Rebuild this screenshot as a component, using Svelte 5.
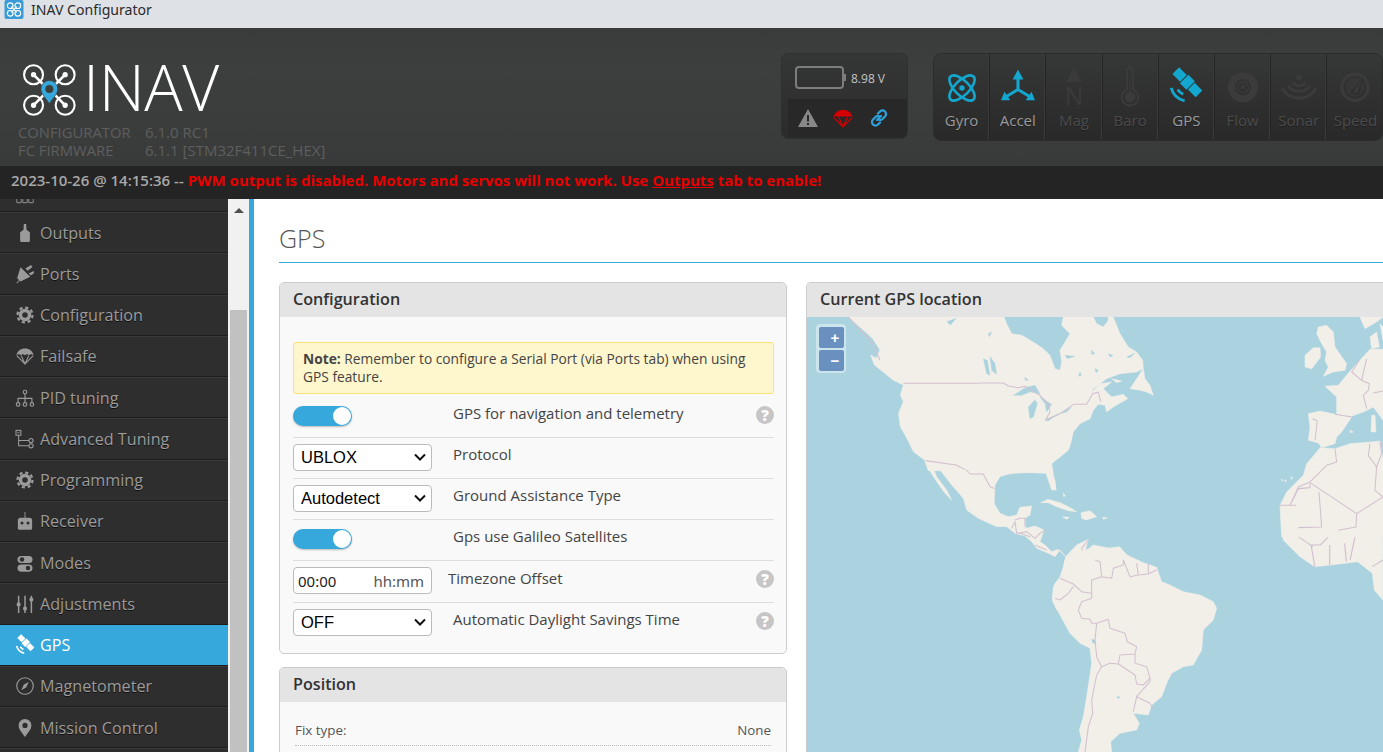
<script>
  const sat = '<g transform="rotate(-45 13.600 9.400)"><rect x="10" y="-3.800" width="7.200" height="8.300"/><rect x="9" y="5.200" width="9.200" height="7"/><rect x="10" y="12.900" width="7.200" height="8.300"/></g><path fill="none" stroke="currentColor" stroke-width="2.200" d="M5.700 14.400A9.300 9.300 0 0 0 9.900 18M.8 13.200A13.600 13.600 0 0 0 11 23"/>';
  const gear = '<circle cx="12" cy="12" r="6" fill="none" stroke="currentColor" stroke-width="4.600"/><circle cx="12" cy="12" r="10" fill="none" stroke="currentColor" stroke-width="3" stroke-dasharray="4.200 3.650"/>';
  const chute = '<path d="M.5 11C1.500 5.500 6.500 2 12 2s10.500 3.500 11.500 9c-2-1.600-4.200-1.600-6 0-1.800-1.600-3.700-1.600-5.500 0-1.800-1.600-3.700-1.600-5.500 0-1.800-1.600-4-1.600-6 0z"/><path d="M1 11.500 12 22.500 23 11.500M7 11.500 12 22.500 17 11.500" fill="none" stroke="currentColor" stroke-width="1.500"/>';
  const icons = {
    mixer: '<g fill="none" stroke="currentColor" stroke-width="1.500" opacity=".75"><rect x="1" y="20" width="6" height="7.500" rx="1"/><rect x="9" y="20" width="6" height="7.500" rx="1"/><rect x="17" y="20" width="6" height="7.500" rx="1"/></g>',
    outputs: '<path d="M10.500 0h3l.5 7.500 4.500 3.500V22a2 2 0 0 1-2 2H7.500a2 2 0 0 1-2-2V11L10 7.500z"/>',
    ports: '<path d="M.5 24 4 20 1.500 17.500 6 3 19 15.500 6 22 4.700 20.800 1.500 24.500z"/><path d="M12.500 4.500 20 0l2 2.500L15.500 7.500zM17 11 24 8v3L19.500 14z"/>',
    gear,
    failsafe: chute,
    pid: '<g fill="none" stroke="currentColor" stroke-width="1.500"><circle cx="12" cy="4" r="2.400"/><circle cx="2.800" cy="20.500" r="2.400"/><circle cx="12" cy="20.500" r="2.400"/><circle cx="21.200" cy="20.500" r="2.400"/><path d="M12 6.400V18M2.800 18V12.500H21.200V18"/></g>',
    adv: '<g fill="none" stroke="currentColor" stroke-width="1.400"><rect x="0" y=".5" width="6.500" height="6.500"/><circle cx="20" cy="14" r="2.800"/><circle cx="20" cy="21" r="2.800"/><path d="M3.500 7V21H17.200M3.500 14H17.200"/></g><path d="M2 3h2.500v1.400H2z"/>',
    receiver: '<path d="M11.400 0h1.200v8h-1.200z"/><path d="M2.500 11a3.500 3.500 0 0 1 3.500-3.500h12a3.500 3.500 0 0 1 3.500 3.500v11a1.500 1.500 0 0 1-1.500 1.500H4A1.500 1.500 0 0 1 2.500 22z"/><circle cx="8" cy="14.500" r="2" fill="#2e2e2e"/><circle cx="16" cy="14.500" r="2" fill="#2e2e2e"/>',
    modes: '<rect x="2" y="2.500" width="20" height="9.500" rx="4.700"/><rect x="2" y="14" width="20" height="9.500" rx="4.700"/><circle cx="8" cy="7.200" r="3" fill="#2e2e2e"/><circle cx="16" cy="18.700" r="3" fill="#2e2e2e"/>',
    adjust: '<g fill="none" stroke="currentColor" stroke-width="2"><path d="M3.500 1v23M12 1v23M20.500 1v23"/></g><rect x="1" y="10" width="5" height="5" rx="1.500"/><rect x="9.500" y="15.500" width="5" height="5" rx="1.500"/><rect x="18" y="3.500" width="5" height="5" rx="1.500"/>',
    gps: sat,
    mag: '<circle cx="12" cy="12" r="11" fill="none" stroke="currentColor" stroke-width="1.500"/><path d="M17 6.500 13.500 14 7 17.500 10.500 10z"/>',
    pin: '<path fill-rule="evenodd" d="M12 0a8.500 8.500 0 0 1 8.500 8.500C20.500 14.500 15 18.500 12 24 9 18.500 3.500 14.500 3.500 8.500A8.500 8.500 0 0 1 12 0zm0 5a3.500 3.500 0 1 0 0 7 3.500 3.500 0 0 0 0-7z"/>'
  };
  const menu = [
    ['Mixer', 'mixer'], ['Outputs', 'outputs'], ['Ports', 'ports'], ['Configuration', 'gear'], ['Failsafe', 'failsafe'],
    ['PID tuning', 'pid'], ['Advanced Tuning', 'adv'], ['Programming', 'gear'], ['Receiver', 'receiver'], ['Modes', 'modes'],
    ['Adjustments', 'adjust'], ['GPS', 'gps'], ['Magnetometer', 'mag'], ['Mission Control', 'pin'], ['OSD', 'gear']
  ];
  const rows = [
    { k: 'toggle', label: 'GPS for navigation and telemetry', help: true },
    { k: 'select', value: 'UBLOX', label: 'Protocol' },
    { k: 'select', value: 'Autodetect', label: 'Ground Assistance Type' },
    { k: 'toggle', label: 'Gps use Galileo Satellites' },
    { k: 'time', label: 'Timezone Offset', help: true },
    { k: 'select', value: 'OFF', label: 'Automatic Daylight Savings Time', help: true }
  ];
  const sensors = [
    ['Gyro', true, 'gyro'], ['Accel', true, 'accel'], ['Mag', false, 'mag'], ['Baro', false, 'baro'],
    ['GPS', true, 'gps'], ['Flow', false, 'flow'], ['Sonar', false, 'sonar'], ['Speed', false, 'speed']
  ];
  const chevron = 'M1 1.500 6 6.500 11 1.500';
</script>

<div class="app">
  <div class="titlebar">
    <svg class="appicon" viewBox="0 0 20 20">
      <rect width="20" height="20" rx="2" fill="#3a9bd6"/>
      <g fill="none" stroke="#fff" stroke-width="1.200"><circle cx="6" cy="6" r="3"/><circle cx="14" cy="6" r="3"/><circle cx="6" cy="14" r="3"/><circle cx="14" cy="14" r="3"/><path d="M7 7 13 13M13 7 7 13"/></g>
    </svg>
    <span>INAV Configurator</span>
  </div>

  <header class="header">
    <div class="brand">
      <div class="logo">
        <svg class="logomark" viewBox="0 0 56 50">
          <g fill="none" stroke="#fff" stroke-width="2">
            <circle cx="10" cy="10" r="9"/><circle cx="40" cy="10" r="9"/><circle cx="10" cy="39" r="9"/><circle cx="40" cy="39" r="9"/>
          </g>
          <g stroke="#fff" stroke-width="2.400" stroke-linecap="round"><path d="M10 10 20 20M40 10 30 20M10 39 20 29M40 39 30 29"/></g>
          <g fill="#fff"><circle cx="10" cy="10" r="2.500"/><circle cx="40" cy="10" r="2.500"/><circle cx="10" cy="39" r="2.500"/><circle cx="40" cy="39" r="2.500"/></g>
          <path fill-rule="evenodd" fill="#37a8db" d="M25 15.500a8 8 0 0 1 8 8c0 5-5 9-8 14-3-5-8-9-8-14a8 8 0 0 1 8-8zm0 4.500a3.600 3.600 0 1 0 0 7.200 3.600 3.600 0 0 0 0-7.200z" stroke="#3a3c3b" stroke-width="0.600"/>
        </svg>
        <span class="wordmark">INAV</span>
      </div>
      <div class="ver"><span>CONFIGURATOR</span><span>6.1.0 RC1</span></div>
      <div class="ver"><span>FC FIRMWARE</span><span>6.1.1 [STM32F411CE_HEX]</span></div>
    </div>

    <div class="battery">
      <div class="batt-top">
        <svg width="52" height="24" viewBox="0 0 52 24"><rect x="1" y="2" width="47" height="21" rx="3" fill="none" stroke="#7d7d7d" stroke-width="2"/><rect x="48" y="9" width="3" height="7" fill="#7d7d7d"/></svg>
        <span>8.98 V</span>
      </div>
      <div class="batt-bottom">
        <svg width="20" height="18" viewBox="0 0 20 18"><path fill-rule="evenodd" fill="#888" d="M10 0l10 18H0zM9 6v6.500h2V6zm0 8v2h2v-2z"/></svg>
        <svg class="redchute" width="20" height="20" viewBox="0 0 24 24">{@html chute}</svg>
        <svg width="20" height="20" viewBox="0 0 20 20"><g fill="none" stroke="#2f9fd8" stroke-width="2.300" stroke-linecap="round"><path d="M8 12 12 8"/><path d="M9 5.500l2-2a3.500 3.500 0 0 1 5 5l-2.500 2.500a3.500 3.500 0 0 1-4 .5"/><path d="M11 14.500l-2 2a3.500 3.500 0 0 1-5-5L6.500 9a3.500 3.500 0 0 1 4-.5"/></g></svg>
      </div>
    </div>

    <div class="sensors">
      {#each sensors as [name, on, ic]}
        <div class="sensor" class:on>
          <svg class="sicon" viewBox="0 0 44 44">
            {#if ic === 'gyro'}
              <g fill="none" stroke="currentColor" stroke-width="3.400"><ellipse cx="22" cy="22" rx="21" ry="9.500" transform="rotate(45 22 22)"/><ellipse cx="22" cy="22" rx="21" ry="9.500" transform="rotate(-45 22 22)"/></g><circle cx="22" cy="22" r="3.500" fill="currentColor"/>
            {:else if ic === 'accel'}
              <g fill="none" stroke="currentColor" stroke-width="4"><path d="M22 24V9M22 24 7 33M22 24 37 33"/></g>
              <path fill="currentColor" d="M22-2l7 13H15zM0 38l4.500-11 7.500 11zM44 38l-4.500-11-7.500 11z"/>
            {:else if ic === 'mag'}
              <path fill="currentColor" d="M22-5 32 14H12z"/>
              <text x="22" y="44" text-anchor="middle" class="n">N</text>
            {:else if ic === 'baro'}
              <path fill-rule="evenodd" fill="currentColor" d="M17-1a5 5 0 0 1 10 0v24a12 12 0 1 1-10 0zm2.500.5v25.200a9.500 9.500 0 1 0 5 0V-.5a2.500 2.500 0 0 0-5 0z"/><circle cx="22" cy="34" r="7" fill="currentColor"/><rect x="21" y="12" width="2" height="18" fill="currentColor"/>
            {:else if ic === 'gps'}
              <g transform="translate(1.500 -.5) scale(1.700)" fill="currentColor">{@html sat}</g>
            {:else if ic === 'flow'}
              <circle cx="22" cy="21" r="15" fill="none" stroke="currentColor" stroke-width="9"/><circle cx="22" cy="21" r="7" fill="none" stroke="currentColor" stroke-width="1.500"/><circle cx="22" cy="21" r="2.500" fill="currentColor"/>
            {:else if ic === 'sonar'}
              <circle cx="22" cy="8" r="3.500" fill="currentColor"/>
              <g fill="none" stroke="currentColor" stroke-width="3.500"><path d="M14 15a10 10 0 0 0 16 0M8 19a17 17 0 0 0 28 0M0 22a25 25 0 0 0 44 0"/></g>
            {:else}
              <circle cx="22" cy="21" r="17" fill="none" stroke="currentColor" stroke-width="4"/><circle cx="22" cy="21" r="12" fill="currentColor" opacity=".6"/><path d="M16 28 33 8 27 31z" fill="#2e2e2e"/><path d="M20 27 31 11 25 28z" fill="currentColor"/>
            {/if}
          </svg>
          <span>{name}</span>
        </div>
      {/each}
    </div>
  </header>

  <div class="log">
    <span class="date">2023-10-26 @ 14:15:36 --{' '}</span><span class="err">PWM output is disabled. Motors and servos will not work. Use <u>Outputs</u> tab to enable!</span>
  </div>

  <div class="main">
    <nav class="side">
      <ul>
        {#each menu as [name, ic]}
          <li class:active={name === 'GPS'}>
            <svg viewBox="0 0 24 24">{@html icons[ic]}</svg>
            <span>{name}</span>
          </li>
        {/each}
      </ul>
    </nav>
    <div class="scroll"><i class="arrow"></i><i class="thumb"></i></div>
    <main class="content">
      <h1>GPS</h1>
      <div class="cols">
        <div class="left">
          <section class="panel">
            <h2>Configuration</h2>
            <div class="body">
              <div class="note"><b>Note:</b> Remember to configure a Serial Port (via Ports tab) when using GPS feature.</div>
              {#each rows as r}
                <div class="row" class:tog={r.k === 'toggle'}>
                  {#if r.k === 'toggle'}
                    <div class="ctl"><span class="switch"><i></i></span></div>
                  {:else if r.k === 'select'}
                    <div class="ctl select"><span>{r.value}</span>
                      <svg width="12" height="8" viewBox="0 0 12 8"><path d={chevron} fill="none" stroke="#111" stroke-width="2"/></svg>
                    </div>
                  {:else}
                    <div class="ctl time"><span>00:00</span><span class="unit">hh:mm</span></div>
                  {/if}
                  <label class:narrow={r.k === 'time'}>{r.label}</label>
                  {#if r.help}<span class="help">?</span>{/if}
                </div>
              {/each}
            </div>
          </section>
          <section class="panel pos">
            <h2>Position</h2>
            <div class="kv"><span>Fix type:</span><span>None</span></div>
          </section>
        </div>

        <section class="panel mapp">
          <h2>Current GPS location</h2>
          <div class="map">
            <svg class="world" viewBox="807 317 576 435">
              <!-- west of North America and West Africa, traced from a wide crop -->
              <g transform="translate(800 280) scale(.3717 .3333)">
                <g class="land">
                  <path d="M130 111 160 140 195 175 215 210 205 235 190 225 200 255 228 280 250 300 278 315 270 345 278 365 265 400 270 440 290 480 305 515 335 540 345 572 490 572 490 111z"/>
                  <path d="M1295 680 1375 600 1568 600 1568 960 1545 930 1540 880 1500 845 1430 855 1385 860 1345 830 1300 780 1295 740z"/>
                </g>
                <g class="bd">
                  <path d="M278 310H490M130 111 195 190 215 240"/>
                  <path d="M338 542 420 555 450 572"/>
                  <path d="M1395 690 1400 745 1340 745 1295 745M1495 700 1495 740 1440 750 1400 795 1375 795 1385 860M1295 760 1340 770 1380 800M1425 795 1425 855M1465 790 1470 845M1495 760 1480 840M1495 760 1568 770M1540 860 1568 840"/>
                </g>
                <g class="sea"><path d="M395 125 420 115 405 135z"/></g>
              </g>
              <!-- eastern North America -->
              <g transform="translate(980 317) scale(.3333)">
                <g class="land">
                  <path d="M0 0 72 0 80 20 95 50 125 55 160 75 190 95 210 115 225 155 240 160 245 135 240 100 270 50 245 25 250 0 340 0 350 20 370 30 385 10 385 0 400 0 420 50 445 90 470 105 488 130 490 155 470 165 420 170 380 185 340 215 335 225 360 200 395 195 370 215 395 240 430 232 443 245 400 270 380 285 375 265 355 262 340 280 330 305 300 320 280 345 272 380 265 400 215 440 220 470 228 520 215 500 200 465 170 465 125 462 95 470 60 475 45 500 42 570 0 570z"/>
                  <path d="M450 215 490 155 495 185 510 205 520 235 500 225 480 220zM395 185 425 192 410 197z"/>
                </g>
                <g class="sea">
                  <path d="M100 235 135 212 165 205 180 230 150 225 125 235zM150 305 145 270 165 248 172 260 160 300zM180 240 215 262 200 285 195 260zM195 310 235 290 205 312zM238 290 275 270 260 285zM10 125 20 170 30 175 22 130zM30 118 45 140 50 172 35 160zM230 70 240 75 232 80zM255 115 285 118 262 125zM335 100 345 110 335 112zM385 110 400 115 390 120zM440 120 465 108 450 122zM135 180 145 190 135 190zM25 50 35 45 28 60zM300 165 305 175 295 178zM345 155 355 160 348 168z"/>
                </g>
                <g class="bd">
                  <path d="M0 198H70L85 207 115 212 135 208 180 235 205 262 210 285 197 308 238 292 280 262 320 262 338 230 355 225 362 255"/>
                  <path d="M0 465 20 490 30 510 45 515"/>
                </g>
              </g>
              <!-- Mexico, Central America, Caribbean -->
              <g transform="translate(920 470) scale(.3333)">
                <g class="land">
                  <path d="M28 0 50 35 75 70 95 90 80 60 50 20 42 0z"/>
                  <path d="M60 0 95 45 130 85 140 120 175 145 230 170 260 170 285 190 315 198 335 215 350 235 385 250 405 260 420 240 437 260 415 238 395 245 375 225 360 215 372 180 345 168 318 175 315 145 330 135 335 108 300 112 290 135 265 140 240 130 222 100 222 50 240 20 270 10 330 8 378 10 395 60 408 60 405 30 385 0z"/>
                  <path d="M362 98 385 88 420 98 445 110 470 125 445 122 410 110 385 98zM483 128 510 122 530 140 498 150 485 145zM428 140 448 142 440 148zM548 142 562 144 550 148zM430 68 436 78 431 80z"/>
                  <path d="M437 260 470 225 505 208 495 245 520 225 570 235 600 230 600 420 410 420 397 385 400 350 420 320 430 290z"/>
                </g>
                <g class="bd">
                  <path d="M140 0 150 12 190 12 210 50 222 55"/>
                  <path d="M285 150 300 145 315 145 315 170M275 175 285 155 290 190 320 185 345 205 360 190 375 180M345 225 380 240M300 190 330 200"/>
                  <path d="M505 210 485 235 495 265 545 275 545 320 520 325 515 380M545 320 560 330 585 320 585 295 600 295"/>
                  <path d="M420 325 460 345 455 355 430 380 405 385M460 345 485 365 515 375"/>
                </g>
              </g>
              <!-- South America -->
              <g transform="translate(1040 560) scale(.3333)">
                <g class="land">
                  <path d="M75 0 70 30 62 50 45 70 40 100 38 125 60 165 90 220 120 250 150 265 155 310 140 410 130 470 118 510 125 540 115 576 215 576 212 545 240 520 290 510 298 490 280 460 325 465 335 435 365 410 382 365 395 340 430 320 460 315 485 270 490 210 520 180 530 145 520 125 480 105 430 95 390 75 365 65 350 22 312 9 261-15 240-38 130-30z"/>
                </g>
                <g class="sea"><path d="M155 238 165 240 167 252 158 248zM230 410 240 410 236 416z"/></g>
                <g class="bd">
                  <path d="M185 320 170 345 155 420 158 460 145 500 135 576"/>
                  <path d="M115 150 125 175 150 178 155 190 170 190 205 178"/>
                  <path d="M60 55 100 72 125 95 155 100 155 115 125 125 115 150"/>
                  <path d="M100 80 85 100 60 120 45 115"/>
                  <path d="M170 190 165 240 170 290 185 320 210 310 235 312 240 285 285 282 290 260 262 245 255 220 210 205 205 178"/>
                  <path d="M235 312 285 345 290 372 310 375 330 355 320 320 285 310 285 282"/>
                  <path d="M330 355 330 365 290 410 330 430 338 445M290 410 280 455"/>
                  <path d="M155 100 155 60 185 50 180 5 165 0M185 50 215 55 220 25 250 15 250 0 270 50 295 45 290 10M295 45 325 42 325 10M325 42 350 30"/>
                </g>
              </g>
              <!-- Western Europe and North Africa -->
              <g transform="translate(1270 317) scale(.3333)">
                <g class="land">
                  <path d="M115 290 150 282 195 292 245 300 215 345 200 360 195 380 155 392 145 378 115 370 120 330z"/>
                  <path d="M165 208 205 205 235 168 265 135 300 97 339 97 339 310 310 270 285 283 245 298 200 292 200 240z"/>
                  <path d="M170 25 190 45 195 90 230 140 225 160 190 165 160 178 175 150 165 130 170 105 155 80 140 50 145 30z"/>
                  <path d="M105 115 130 92 150 92 152 120 125 155 105 150zM300 60 320 45 328 90 305 95zM270 0 285 35 320 15 339 0zM330 20 339 30 339 70zM305 295 315 295 318 345 303 345zM240 340 250 345 242 347z"/>
                  <path d="M30 565 50 525 100 475 110 440 140 405 150 392 195 395 240 380 300 375 330 372 339 425 339 660 35 660z"/>
                  <path d="M35 486 40 490 36 492zM45 488 50 492 45 494zM64 478 68 485 63 486z"/>
                </g>
                <g class="bd">
                  <path d="M128 305 142 312 135 370M195 292 245 300M268 130 245 165 275 190 298 200 295 220 280 235 290 275M290 125 275 190M310 228 339 222"/>
                  <path d="M195 395 200 435 170 445 120 495 85 510 60 565 30 565M120 497 260 590 339 540M147 525 155 630 85 632M260 590 258 630 205 640M300 380 295 415 320 450 315 520 339 540M330 375 335 410 318 455M120 500 120 512 85 515 60 565 78 565"/>
                </g>
              </g>
            </svg>
            <div class="zoomctl"><button>+</button><button>−</button></div>
          </div>
        </section>
      </div>
    </main>
  </div>
</div>

<style>
  :global(body) { margin: 0; overflow: hidden; }
  .app { width: 1383px; height: 752px; display: flex; flex-direction: column; font-family: "Open Sans", "Liberation Sans", sans-serif; overflow: hidden; }

  .titlebar { height: 28px; flex: none; background: #dee1e6; display: flex; align-items: flex-start; gap: 7px; padding-left: 4px; font: 14.100px/20px "Noto Sans", "Open Sans", sans-serif; color: #2b2b2b; box-sizing: border-box; }
  .appicon { width: 20px; height: 19px; }

  .header { height: 138px; flex: none; background: linear-gradient(#3a3c3b, #3d3f3e 30%, #393b3a); display: flex; align-items: flex-start; }
  .brand { margin-left: 18px; padding-top: 32px; color: #5d5f5f; font-size: 14.800px; line-height: 18px; width: 763px; flex: none; }
  .logo { display: flex; align-items: center; height: 62px; margin-bottom: 1px; margin-left: 5px; }
  .logomark { width: 59px; height: 53px; flex: none; margin-top: -1px; }
  .wordmark { font-family: "Open Sans", sans-serif; font-weight: 300; font-size: 64px; line-height: 62px; color: #fff; letter-spacing: -.5px; margin-left: 1px; margin-top: -8px; }
  .ver { display: flex; }
  .ver span:first-child { width: 127px; flex: none; }
  .ver span:last-child { font-size: 15px; }

  .battery { margin-top: 25px; width: 127px; height: 86px; box-sizing: border-box; flex: none; border-radius: 7px; background: linear-gradient(#353636, #2b2b2b); border: 1px solid #2f2f2f; display: flex; flex-direction: column; }
  .batt-top { height: 45px; box-sizing: border-box; padding: 3px 0 0 13px; display: flex; align-items: center; gap: 4px; font-size: 12px; color: #c4c4c4; flex: none; }
  .batt-top svg { margin-top: -2px; }
  .batt-bottom { flex: 1; margin-left: 6px; background: #282828; border-radius: 0 0 6px 0; display: flex; align-items: center; justify-content: space-around; padding: 0 10px 0 2px; margin-bottom: 1px; }
  .redchute { fill: #d40000; color: #d40000; }

  .sensors { margin-left: 25px; margin-top: 25px; height: 88px; width: 450px; box-sizing: border-box; flex: none; display: flex; background: linear-gradient(#363737, #292929); border: 1px solid #2c2c2c; border-radius: 8px; overflow: hidden; }
  .sensor { width: 56.200px; flex: none; box-sizing: border-box; border-right: 1px solid #242424; box-shadow: inset -1px 0 0 #3a3a3a; display: flex; flex-direction: column; align-items: center; color: #3b3b3b; font-size: 15px; }
  .sensor:last-child { border-right: none; box-shadow: none; }
  .sensor span { color: #4c4c4c; margin-top: 6px; line-height: 18px; white-space: nowrap; text-shadow: 0 1px 0 #1e1e1e; }
  .sensor.on { color: #13a7cf; }
  .sensor.on span { color: #9a9a9a; }
  .sicon { width: 34px; height: 34px; margin-top: 17px; flex: none; overflow: visible; }
  .n { font: 32px "Open Sans", sans-serif; fill: currentColor; }

  .log { height: 33px; flex: none; box-sizing: border-box; background: #242424; padding: 5px 11px; font-size: 15px; line-height: 19px; white-space: pre; }
  .date { color: #a8a8a8; font-weight: 600; }
  .err { color: #e60000; font-weight: 700; }

  .main { flex: 1; display: flex; min-height: 0; overflow: hidden; }
  .side { width: 228px; flex: none; overflow: hidden; background: #2e2e2e; }
  .side ul { list-style: none; margin: -28.150px 0 0; padding: 0; }
  .side li { height: 41.250px; box-sizing: border-box; display: flex; align-items: center; border-top: 1px solid #3a3a3a; border-bottom: 1px solid #1d1d1d; color: #9b9b9b; font-size: 16.150px; text-shadow: 0 1px 0 #111; white-space: nowrap; background: #2e2e2e; }
  .side li svg { width: 18px; height: 18px; margin: 0 6px 0 16px; fill: currentColor; flex: none; overflow: visible; }
  .side li.active { background: #37a8db; color: #fff; text-shadow: none; border-top-color: #37a8db; }

  .scroll { width: 21px; flex: none; background: #f1f1f1; box-sizing: border-box; padding: 9px 2px 0; display: flex; flex-direction: column; align-items: center; }
  .arrow { width: 0; height: 0; border-left: 5px solid transparent; border-right: 5px solid transparent; border-bottom: 5px solid #505050; }
  .thumb { width: 17px; flex: 1; background: #c1c1c1; margin-top: 97px; }

  .content { flex: 1; min-width: 0; border-left: 5px solid #37a8db; background: #fff; padding: 0 0 0 25px; overflow: hidden; }
  h1 { margin: 0 0 19px; height: 64px; box-sizing: border-box; padding: 21px 0 0 0; line-height: 36px; font-size: 25px; font-weight: 300; color: #555; border-bottom: 1px solid #37a8db; }
  .cols { display: flex; gap: 19px; align-items: flex-start; }
  .left { width: 508px; flex: none; display: flex; flex-direction: column; gap: 13px; }
  .panel { border: 1px solid #ccc; border-radius: 5px; background: #f9f9f9; overflow: hidden; box-sizing: border-box; }
  h2 { margin: 0; height: 34px; padding: 0 13px; background: #e4e4e4; font-size: 16.150px; font-weight: 600; line-height: 32px; color: #333; }
  .body { padding: 25px 12px 15.400px 13px; font-size: 15px; color: #444; }
  .note { height: 52px; box-sizing: border-box; border: 1px solid #fbe27b; border-radius: 3px; background: #fef6cd; padding: 7px 9px; font-size: 13.750px; line-height: 18px; color: #444; margin-bottom: 2.600px; }
  .note b { font-weight: 700; }
  .row { height: 41.200px; box-sizing: border-box; display: flex; border-bottom: 1px solid #ddd; align-items: flex-start; padding-top: 6px; position: relative; }
  .row:last-child { border-bottom: none; height: 35px; }
  .row label { margin-left: 21px; line-height: 20px; margin-top: 0; }
  .row label.narrow { margin-left: 16px; margin-top: 1px; }
  .ctl { width: 139px; height: 27px; box-sizing: border-box; flex: none; font-family: "Liberation Sans", sans-serif; font-size: 16.500px; color: #000; }
  .row.tog .ctl { height: 20px; margin-top: 9px; }
  .row.tog label { margin-top: 6px; }
  .row.tog { padding-top: 0; }
  .switch { display: block; width: 59px; height: 20px; border-radius: 10px; background: #37a8db; position: relative; box-shadow: 0 1px 2px rgba(0,0,0,.25); }
  .switch i { position: absolute; right: 1px; top: 1px; width: 18px; height: 18px; border-radius: 50%; background: #fff; }
  .select, .time { background: #fff; border: 1px solid #bbb; border-radius: 4px; display: flex; align-items: center; justify-content: space-between; padding: 0 5px 0 7px; }
  .time { padding: 0 7px 0 4px; font-family: "Noto Sans", "Open Sans", sans-serif; font-size: 15px; color: #222; }
  .unit { color: #555; }
  .help { position: absolute; right: 0; top: 9px; width: 18px; height: 18px; border-radius: 50%; background: #c6c6c6; color: #fff; font-weight: 800; font-size: 15px; line-height: 18px; text-align: center; }

  .pos { height: 120px; }
  .kv { margin: 19px 15px 0; display: flex; justify-content: space-between; font-size: 13.400px; line-height: 18px; color: #555; border-bottom: 1px dotted #bbb; padding-bottom: 6px; }

  .mapp { width: 700px; flex: none; border-right: none; }
  .map { height: 440px; background: #aad3df; position: relative; overflow: hidden; }
  .world { position: absolute; left: 0; top: 0; width: 576px; height: 435px; display: block; filter: blur(.45px); }
  .land { fill: #f2efe9; stroke: #f2efe9; stroke-width: 1.500; stroke-linejoin: round; }
  .sea { fill: #aad3df; stroke: #aad3df; stroke-width: 1; stroke-linejoin: round; }
  .bd { fill: none; stroke: #d2c0cf; stroke-width: 3.200; stroke-linejoin: round; }
  .zoomctl { position: absolute; left: 9px; top: 7px; padding: 3px 2px 2px 3px; background: rgba(255,255,255,.4); border-radius: 4px; display: flex; flex-direction: column; gap: 2px; }
  .zoomctl button { width: 25px; height: 21px; padding: 0 0 1px 7px; border: 0; background: #6a90bf; color: #fff; font: 700 15px/19px "Liberation Sans", sans-serif; display: block; border-radius: 2px; }
</style>
